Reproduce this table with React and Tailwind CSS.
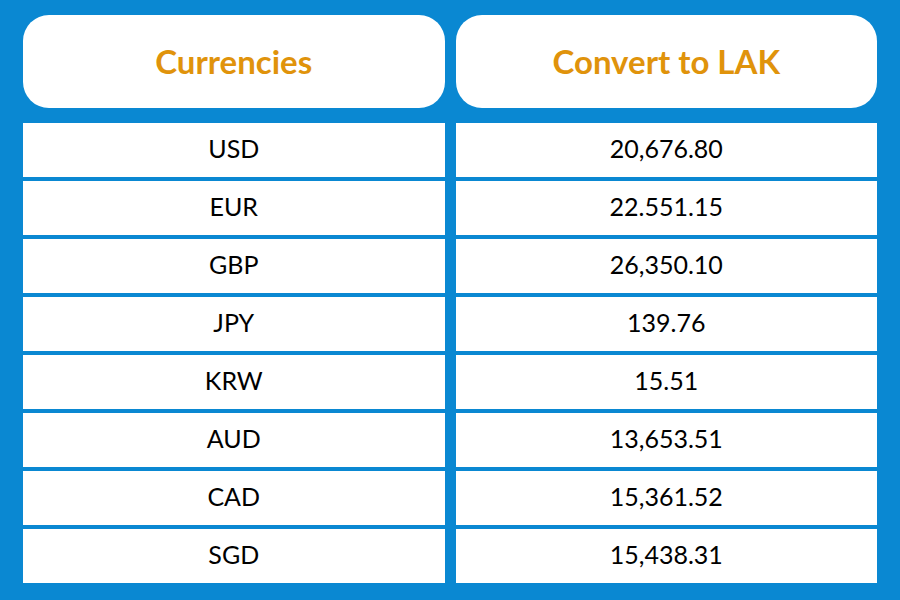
const rows = [
  ['USD', '20,676.80'],
  ['EUR', '22.551.15'],
  ['GBP', '26,350.10'],
  ['JPY', '139.76'],
  ['KRW', '15.51'],
  ['AUD', '13,653.51'],
  ['CAD', '15,361.52'],
  ['SGD', '15,438.31'],
];

function Column({ title, values }) {
  return (
    <div className="flex flex-col">
      <div className="h-[93px] rounded-[26px] bg-white flex items-center justify-center">
        <span className="text-[33px] font-bold text-[#e0930b] leading-none">{title}</span>
      </div>
      <div className="mt-[15px] flex flex-col gap-[4px]">
        {values.map((v, i) => (
          <div key={i} className="h-[54px] bg-white flex items-center justify-center pb-[3px]">
            <span className="text-[25px] text-black leading-none">{v}</span>
          </div>
        ))}
      </div>
    </div>
  );
}

export default function App() {
  return (
    <div
      className="w-[900px] h-[600px] bg-[#0a88d2] px-[23px] pt-[15px] grid grid-cols-2 gap-x-[11px] items-start"
      style={{ fontFamily: 'Lato, "Noto Sans", sans-serif' }}
    >
      <Column title="Currencies" values={rows.map((r) => r[0])} />
      <Column title="Convert to LAK" values={rows.map((r) => r[1])} />
    </div>
  );
}
